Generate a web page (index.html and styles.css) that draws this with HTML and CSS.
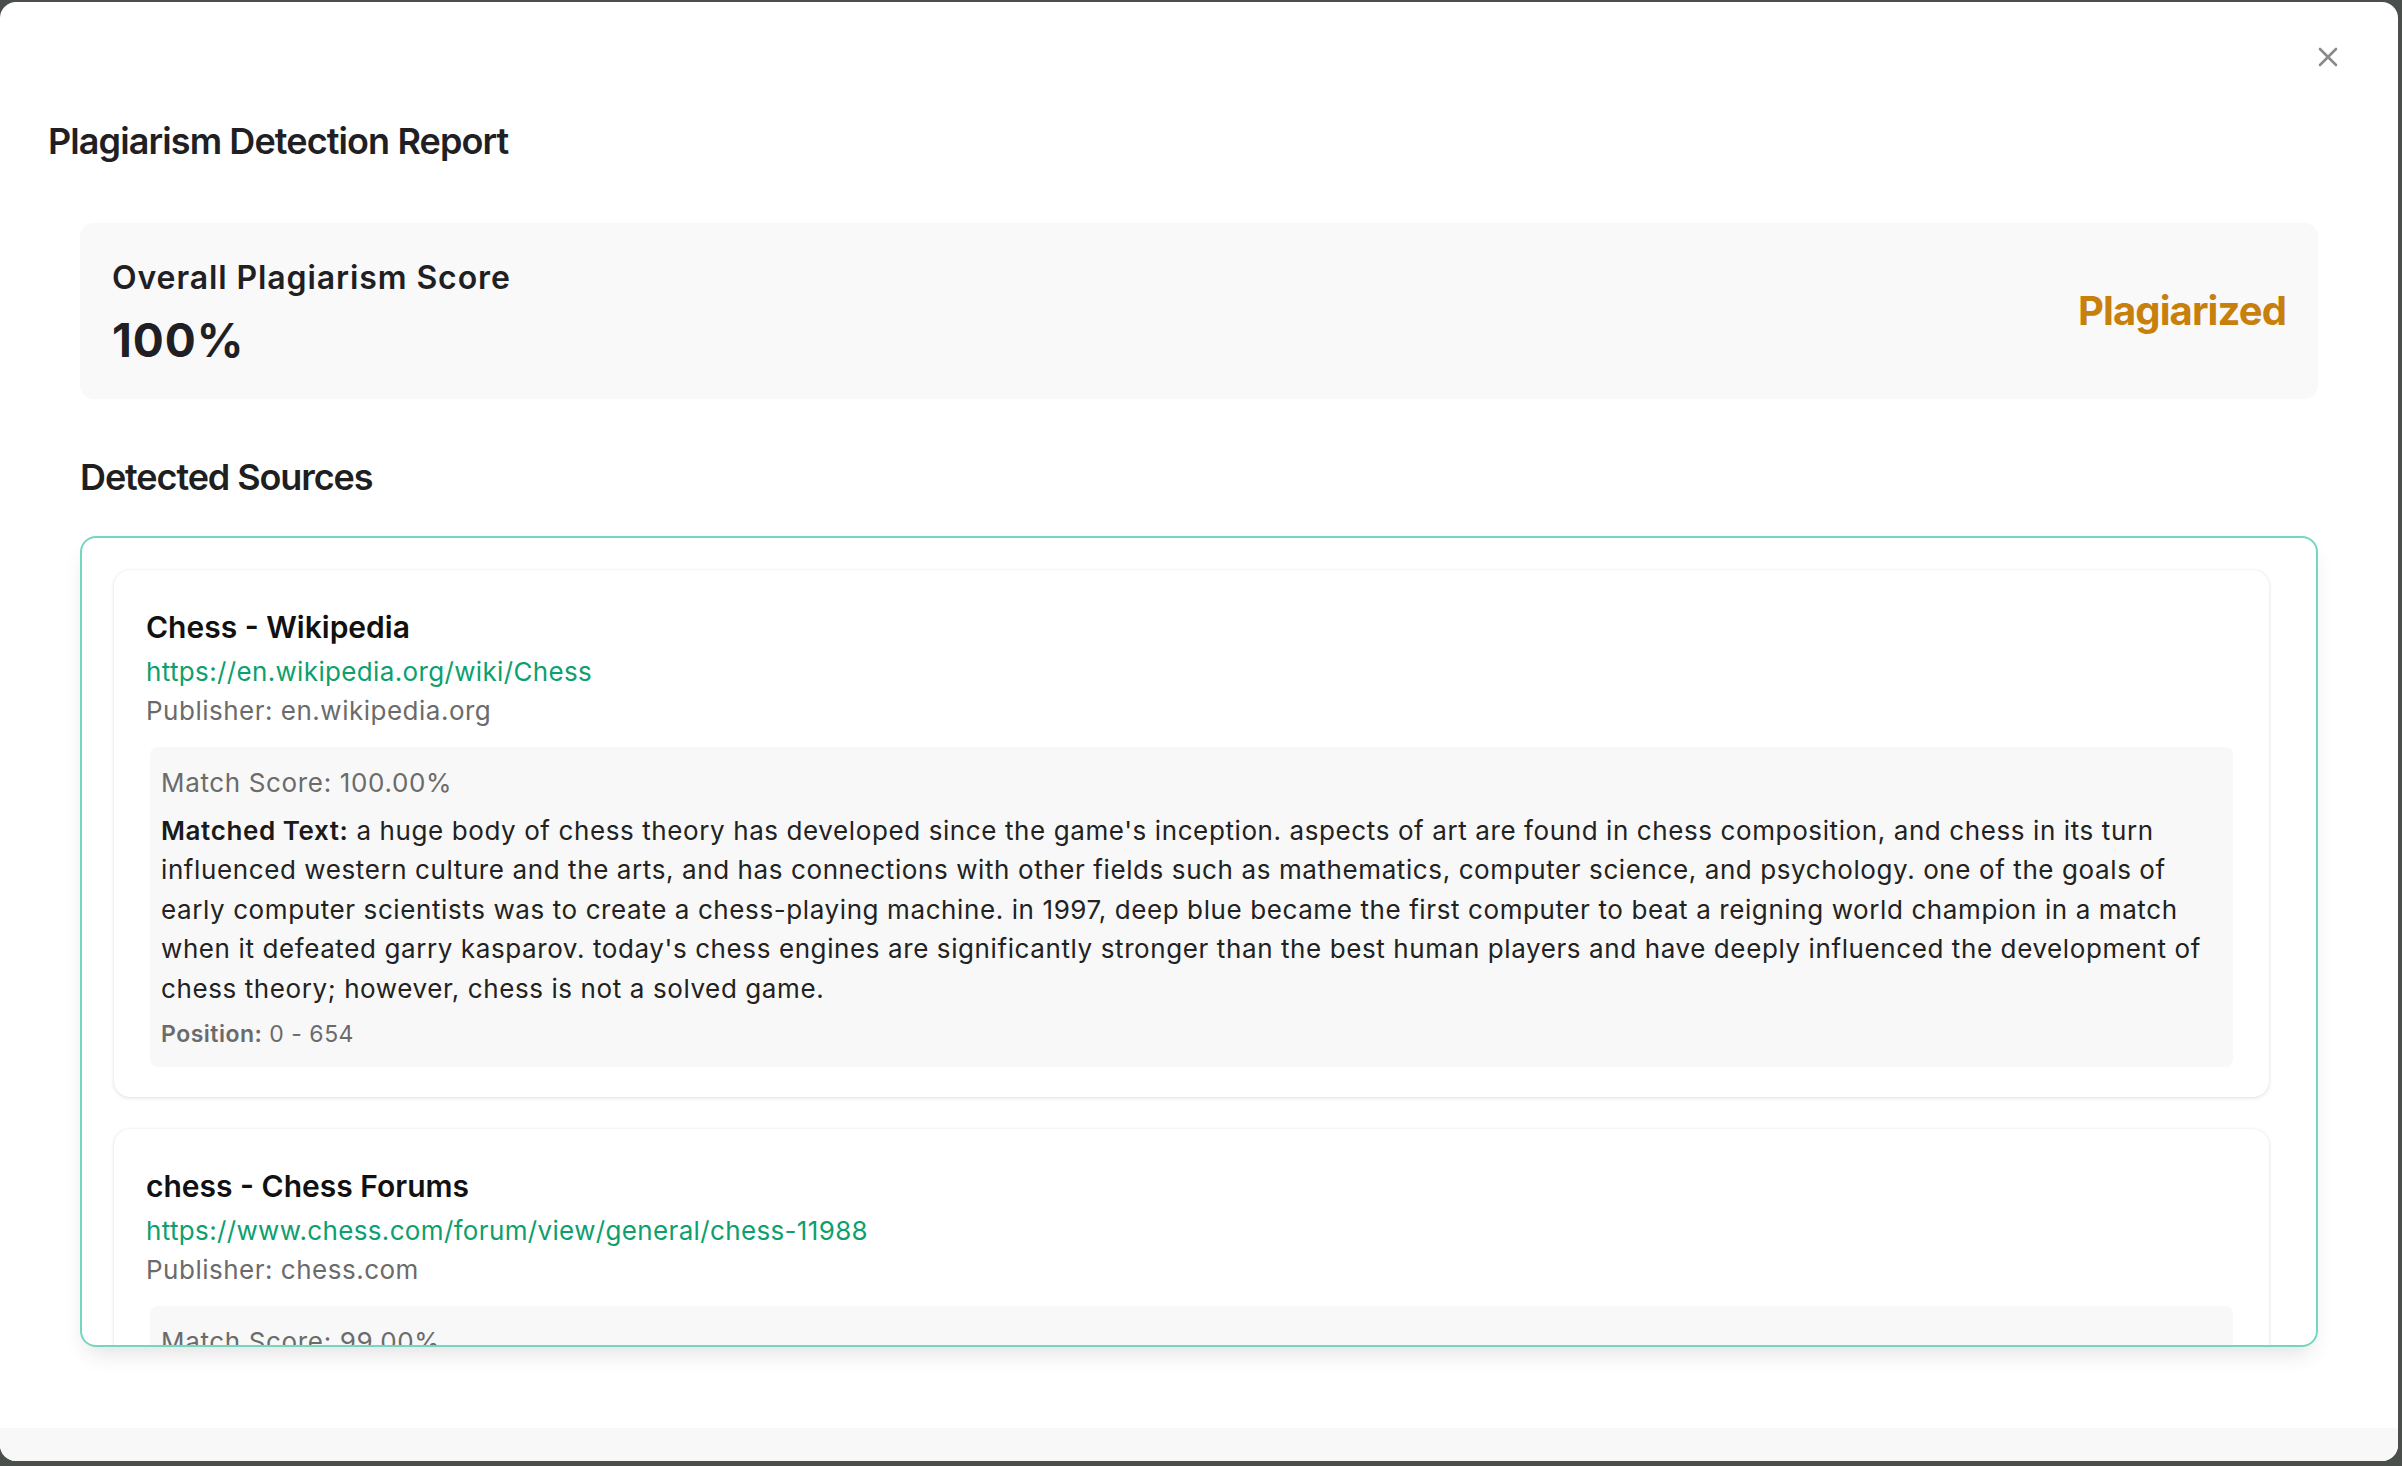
FILE: index.html
```html
<!DOCTYPE html>
<html lang="en">
<head>
  <meta charset="UTF-8">
  <meta name="viewport" content="width=device-width, initial-scale=1">
  <title>Plagiarism Detection Report</title>
  <link rel="stylesheet" href="styles.css">
</head>
<body>
  <div class="modal">
    <button class="modal-close" aria-label="Close">
      <svg width="20" height="20" viewBox="0 0 20 20">
        <path d="M2 2 L18 18 M18 2 L2 18" stroke="#8a8a8a" stroke-width="2.6" stroke-linecap="round" fill="none"/>
      </svg>
    </button>

    <div class="modal-header">
      <h2>Plagiarism Detection Report</h2>
    </div>

    <div class="modal-body">
      <!-- Overall score -->
      <div class="score-card">
        <div>
          <div class="score-label">Overall Plagiarism Score</div>
          <div class="score-value">100%</div>
        </div>
        <div class="score-status">Plagiarized</div>
      </div>

      <h3 class="sources-title">Detected Sources</h3>

      <!-- Source list -->
      <div class="sources-list">
        <div class="source-card">
          <div class="source-title">Chess - Wikipedia</div>
          <a class="source-url" href="#">https://en.wikipedia.org/wiki/Chess</a>
          <div class="source-publisher">Publisher: en.wikipedia.org</div>
          <div class="match-block">
            <div class="match-score">Match Score: 100.00%</div>
            <p class="match-text"><strong>Matched Text:</strong> a huge body of chess theory has developed since the game's inception. aspects of art are found in chess composition, and chess in its turn influenced western culture and the arts, and has connections with other fields such as mathematics, computer science, and psychology. one of the goals of early computer scientists was to create a chess-playing machine. in 1997, deep blue became the first computer to beat a reigning world champion in a match when it defeated garry kasparov. today's chess engines are significantly stronger than the best human players and have deeply influenced the development of chess theory; however, chess is not a solved game.</p>
            <div class="match-position"><strong>Position:</strong> 0 - 654</div>
          </div>
        </div>

        <div class="source-card">
          <div class="source-title">chess - Chess Forums</div>
          <a class="source-url" href="#">https://www.chess.com/forum/view/general/chess-11988</a>
          <div class="source-publisher">Publisher: chess.com</div>
          <div class="match-block">
            <div class="match-score">Match Score: 99.00%</div>
          </div>
        </div>
      </div>
    </div>

    <div class="modal-footer"></div>
  </div>
</body>
</html>
```

FILE: styles.css
```css
* {
  box-sizing: border-box;
}

body {
  margin: 0;
  padding: 2px 4px 5px 0;
  background: #4a4f4c;
  font-family: 'Inter', 'Helvetica Neue', Arial, sans-serif;
  color: #1f1f1f;
}

.modal {
  position: relative;
  height: calc(100vh - 7px);
  display: flex;
  flex-direction: column;
  background: #fff;
  border-radius: 16px;
  overflow: hidden;
}

.modal-close {
  position: absolute;
  top: 45px;
  right: 60px;
  padding: 0;
  border: none;
  background: none;
  cursor: pointer;
  line-height: 0;
}

.modal-header {
  padding: 117px 48px 0;
}

.modal-header h2 {
  margin: 0;
  font-size: 36px;
  font-weight: 600;
  line-height: 1.25;
  letter-spacing: -0.9px;
  color: #1f1f24;
}

.modal-body {
  padding: 59px 80px 79px;
}

/* Overall score */
.score-card {
  display: flex;
  justify-content: space-between;
  align-items: center;
  padding: 35px 32px 29px;
  background: #f9f9f9;
  border-radius: 14px;
}

.score-label {
  font-size: 32px;
  font-weight: 600;
  line-height: 1.25;
  letter-spacing: 0.9px;
  margin-bottom: 14px;
  color: #1f1f24;
}

.score-value {
  font-size: 46px;
  font-weight: 700;
  line-height: 1.25;
  letter-spacing: 1px;
  color: #1f1f24;
}

.score-status {
  margin-bottom: 7px;
  font-size: 40px;
  font-weight: 700;
  letter-spacing: -0.9px;
  color: #c8800c;
}

.sources-title {
  margin: 56px 0 36px;
  font-size: 36px;
  font-weight: 600;
  line-height: 1.25;
  letter-spacing: -1.1px;
  color: #1f1f1f;
}

/* Source list */
.sources-list {
  height: 811px;
  overflow: hidden;
  padding: 32px 47px 32px 32px;
  border: 2px solid #74d6bf;
  border-radius: 16px;
  box-shadow: 0 12px 22px -6px rgba(0, 0, 0, 0.12);
}

.source-card {
  padding: 35px 32px 30px;
  margin-bottom: 32px;
  background: #fff;
  border-radius: 16px;
  box-shadow: 0 1px 4px rgba(0, 0, 0, 0.12), 0 0 1px rgba(0, 0, 0, 0.08);
}

.source-title {
  font-size: 30px;
  font-weight: 600;
  line-height: 1.5;
  margin-bottom: 2px;
  color: #111;
}

.source-url {
  display: block;
  font-size: 26px;
  line-height: 1.5;
  letter-spacing: 0.35px;
  color: #0e9f6e;
  text-decoration: none;
}

.source-publisher {
  font-size: 26px;
  line-height: 1.5;
  letter-spacing: 0.5px;
  margin-bottom: 17px;
  color: #6b6b6b;
}

.match-block {
  margin: 0 4px;
  padding: 16px 16px 16px 11px;
  background: #f8f8f8;
  border-radius: 8px;
}

.match-score {
  font-size: 26px;
  line-height: 1.5;
  letter-spacing: 0.65px;
  margin-bottom: 9px;
  color: #6b6b6b;
}

.match-text {
  margin: 0 0 10px;
  font-size: 26px;
  line-height: 1.52;
  letter-spacing: 0.6px;
  color: #222;
}

.match-text strong {
  font-weight: 600;
  color: #1a1a1a;
}

.match-position {
  font-size: 23px;
  line-height: 1.45;
  letter-spacing: 0.5px;
  color: #6b6b6b;
}

.match-position strong {
  font-weight: 600;
}

.modal-footer {
  margin-top: auto;
  height: 33px;
  background: #f8f8f8;
}
```
